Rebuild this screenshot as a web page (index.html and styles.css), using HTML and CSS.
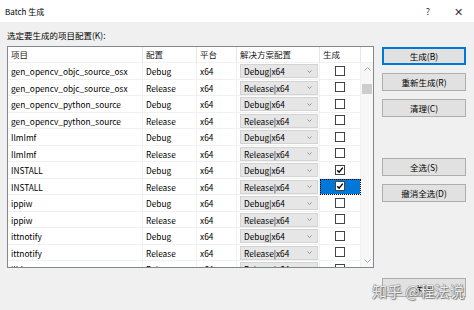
FILE: index.html
```html
<!DOCTYPE html>
<html lang="zh-CN">
<head>
    <meta charset="UTF-8">
    <title>Batch 生成</title>
    <link rel="stylesheet" href="styles.css">
</head>
<body>
    <div class="window">
        <div class="titlebar">
            <span class="title">Batch 生成</span>
            <span class="title-btn help">?</span>
            <span class="title-btn close">✕</span>
        </div>

        <div class="dialog">
            <div class="left">
                <div class="caption">选定要生成的项目配置(K):</div>

                <div class="list">
                    <div class="list-head">
                        <div class="hcell">项目</div>
                        <div class="hcell">配置</div>
                        <div class="hcell">平台</div>
                        <div class="hcell">解决方案配置</div>
                        <div class="hcell">生成</div>
                        <div class="hcell filler"></div>
                    </div>
                    <div class="list-body">
                        <div class="rows" id="rows"></div>
                        <div class="scrollbar">
                            <div class="sb-arrow">
                                <svg width="7" height="4" viewBox="0 0 7 4"><path d="M0.5 3.5 L3.5 0.5 L6.5 3.5" fill="none" stroke="#a6a6a6" stroke-width="1"/></svg>
                            </div>
                            <div class="sb-track">
                                <div class="sb-thumb"></div>
                            </div>
                            <div class="sb-arrow">
                                <svg width="7" height="4" viewBox="0 0 7 4"><path d="M0.5 0.5 L3.5 3.5 L6.5 0.5" fill="none" stroke="#a6a6a6" stroke-width="1"/></svg>
                            </div>
                        </div>
                    </div>
                </div>
            </div>

            <div class="right">
                <button class="btn btn-default">生成(B)</button>
                <button class="btn">重新生成(R)</button>
                <button class="btn">清理(C)</button>
                <button class="btn btn-group">全选(S)</button>
                <button class="btn">撤消全选(D)</button>
                <button class="btn btn-close">关闭</button>
            </div>
        </div>

        <div class="watermark">知乎 @程法说</div>
    </div>

    <script>
        const projects = [
            ['gen_opencv_objc_source_osx', 'Debug', false],
            ['gen_opencv_objc_source_osx', 'Release', false],
            ['gen_opencv_python_source', 'Debug', false],
            ['gen_opencv_python_source', 'Release', false],
            ['IlmImf', 'Debug', false],
            ['IlmImf', 'Release', false],
            ['INSTALL', 'Debug', true],
            ['INSTALL', 'Release', true],
            ['ippiw', 'Debug', false],
            ['ippiw', 'Release', false],
            ['ittnotify', 'Debug', false],
            ['ittnotify', 'Release', false],
            ['libjasper', 'Release', false]
        ];

        const chevron = '<svg width="5" height="3" viewBox="0 0 5 3"><path d="M0.5 0.5 L2.5 2.5 L4.5 0.5" fill="none" stroke="#8a8a8a" stroke-width="0.9"/></svg>';
        const tick = '<svg width="8" height="8" viewBox="0 0 8 8"><path d="M1.2 4.2 L3.1 6.1 L6.8 1.6" fill="none" stroke="#000" stroke-width="1.4"/></svg>';

        const rows = document.getElementById('rows');
        projects.forEach((p, i) => {
            const row = document.createElement('div');
            row.className = 'row';
            const selected = i === 7 ? ' selected' : '';
            row.innerHTML =
                '<div class="cell">' + p[0] + '</div>' +
                '<div class="cell">' + p[1] + '</div>' +
                '<div class="cell">x64</div>' +
                '<div class="cell combo-cell"><div class="combo"><span>' + p[1] + '|x64</span>' + chevron + '</div></div>' +
                '<div class="cell check-cell' + selected + '"><span class="check">' + (p[2] ? tick : '') + '</span></div>';
            rows.appendChild(row);
        });
    </script>
</body>
</html>
```

FILE: styles.css
```css
* {
    box-sizing: border-box;
}

body {
    margin: 0;
    font-family: "Noto Sans CJK SC", "Noto Sans", sans-serif;
    font-size: 8.3px;
    color: #000;
    background-color: #f0f0f0;
}

.window {
    position: relative;
    width: 474px;
    height: 310px;
    overflow: hidden;
    background-color: #f0f0f0;
}

.titlebar {
    display: flex;
    align-items: center;
    height: 22px;
    padding-left: 5px;
    background-color: #fff;
}

    .titlebar .title {
        flex: 1;
        font-size: 8px;
    }

    .titlebar .title-btn {
        width: 30px;
        text-align: center;
        color: #333;
    }

    .titlebar .help {
        font-size: 9px;
    }

    .titlebar .close {
        font-size: 11px;
        margin-right: 1px;
    }

.dialog {
    display: flex;
    height: 288px;
    padding-left: 7px;
}

.left {
    width: 367px;
}

.caption {
    height: 24px;
    line-height: 24px;
    padding-top: 1px;
    font-size: 8.5px;
}

/* list view */
.list {
    height: 222px;
    border: 1px solid #828790;
    background-color: #fff;
    display: flex;
    flex-direction: column;
}

.list-head {
    display: grid;
    grid-template-columns: 135px 54px 40px 83px 41px 12px;
    height: 16px;
    border-bottom: 1px solid #f0f0f0;
    font-size: 8.5px;
}

    .list-head .hcell {
        padding-left: 3px;
        line-height: 15px;
        border-right: 1px solid #e5e5e5;
        color: #1a1a1a;
    }

        .list-head .hcell.filler {
            border-right: none;
        }

.list-body {
    flex: 1;
    display: flex;
    min-height: 0;
}

.rows {
    width: 353px;
    overflow: hidden;
}

.row {
    display: grid;
    grid-template-columns: 135px 54px 40px 83px 41px;
    height: 16.5px;
}

    .row .cell {
        padding-left: 3px;
        line-height: 16px;
        border-right: 1px solid #f0f0f0;
        border-bottom: 1px solid #f0f0f0;
        white-space: nowrap;
        overflow: hidden;
    }

    .row .combo-cell {
        padding: 1px 1px 1px 3px;
    }

.combo {
    display: flex;
    align-items: center;
    justify-content: space-between;
    height: 14px;
    padding: 0 5px 0 3px;
    background-color: #e6e6e6;
    border: 1px solid #d3d3d3;
    line-height: 12px;
}

.row .check-cell {
    display: flex;
    align-items: center;
    justify-content: center;
    padding-left: 0;
}

    .row .check-cell.selected {
        background-color: #0078d7;
        outline: 1px dotted #000;
        outline-offset: -1px;
    }

.check {
    display: flex;
    align-items: center;
    justify-content: center;
    width: 10px;
    height: 10px;
    border: 1px solid #444;
    background-color: #fff;
}

/* scrollbar */
.scrollbar {
    width: 12px;
    display: flex;
    flex-direction: column;
    background-color: #f7f7f7;
}

.sb-arrow {
    height: 12px;
    display: flex;
    align-items: center;
    justify-content: center;
}

.sb-track {
    flex: 1;
    padding-top: 9px;
}

.sb-thumb {
    height: 10px;
    margin: 0 1px;
    background-color: #cdcdcd;
}

/* buttons */
.right {
    display: flex;
    flex-direction: column;
    width: 84px;
    margin-left: 8px;
    padding-top: 25px;
    padding-bottom: 13px;
}

.btn {
    height: 18px;
    margin-bottom: 8px;
    padding: 0;
    font-family: inherit;
    font-size: 8.5px;
    color: #000;
    background-color: #e1e1e1;
    border: 1px solid #adadad;
}

.btn-default {
    border-color: #0078d7;
    box-shadow: inset 0 0 0 1px #0078d7;
}

.btn-group {
    margin-top: 33px;
}

.btn-close {
    margin-top: auto;
    margin-bottom: 0;
    height: 19px;
}

.watermark {
    position: absolute;
    left: 372px;
    top: 280px;
    font-size: 15px;
    white-space: nowrap;
    color: rgba(255, 255, 255, 0.9);
    text-shadow: 0 0 1px #666, 0 0 1px #666, 1px 1px 1px #888;
}
```
